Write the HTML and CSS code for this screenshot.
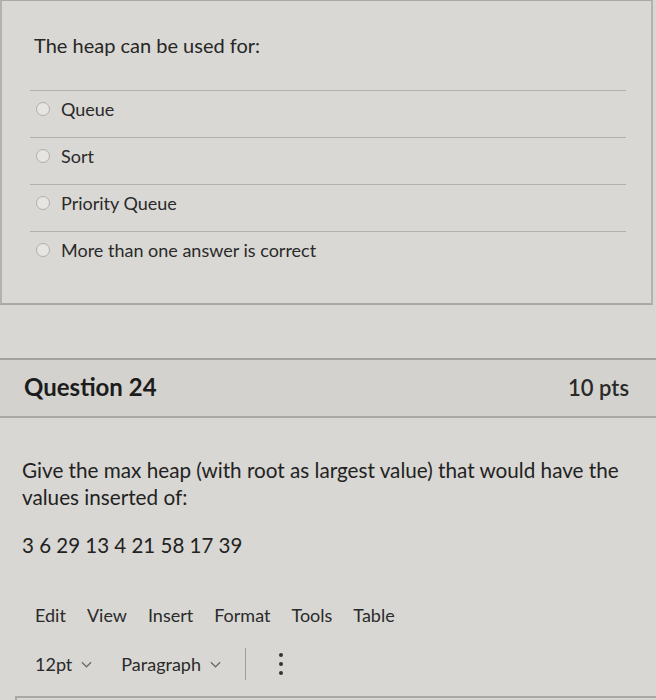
FILE: index.html
```html
<!DOCTYPE html>
<html>
<head>
<meta charset="utf-8">
<link rel="stylesheet" href="styles.css">
</head>
<body>
<div class="page">
  <div class="card">
    <div class="qtext">The heap can be used for:</div>
    <div class="options">
      <div class="opt"><span class="radio"></span><span>Queue</span></div>
      <div class="opt"><span class="radio"></span><span>Sort</span></div>
      <div class="opt"><span class="radio"></span><span>Priority Queue</span></div>
      <div class="opt"><span class="radio"></span><span>More than one answer is correct</span></div>
    </div>
  </div>

  <div class="qheader">
    <div class="qtitle">Question 24</div>
    <div class="qpts">10 pts</div>
  </div>

  <div class="qbody">
    <p class="prompt">Give the max heap (with root as largest value) that would have the values inserted of:</p>
    <p class="values">3 6 29 13 4 21 58 17 39</p>
  </div>

  <div class="menubar">
    <span>Edit</span><span>View</span><span>Insert</span><span>Format</span><span>Tools</span><span>Table</span>
  </div>

  <div class="toolbar">
    <div class="tb-item">12pt <svg class="chev" viewBox="0 0 12 7" width="11" height="7"><path d="M1 1 L6 6 L11 1" fill="none" stroke="#6a6a6a" stroke-width="1.3"/></svg></div>
    <div class="tb-item para">Paragraph <svg class="chev" viewBox="0 0 12 7" width="11" height="7"><path d="M1 1 L6 6 L11 1" fill="none" stroke="#6a6a6a" stroke-width="1.3"/></svg></div>
    <div class="tb-sep"></div>
    <div class="tb-dots"><i></i><i></i><i></i></div>
  </div>

  <div class="editor"></div>
</div>
</body>
</html>
```

FILE: styles.css
```css
html, body {
  margin: 0;
  padding: 0;
  background: #d8d7d3;
}
body {
  font-family: Lato, "Open Sans", sans-serif;
  color: #222;
  width: 656px;
  height: 700px;
  overflow: hidden;
}
.page {
  display: flex;
  flex-direction: column;
}
.card {
  height: 302px;
  border-top: 1px solid #aaa9a5;
  border-left: 2px solid #b3b2ae;
  border-right: 2px solid #b3b2ae;
  border-bottom: 2px solid #a9a8a4;
  margin-right: 3px;
  padding: 0 25px 0 28px;
  background: #d9d8d4;
}
.qtext {
  font-size: 20px;
  line-height: 24px;
  padding-top: 32px;
  height: 57px;
  padding-left: 4px;
  color: #262626;
}
.opt {
  border-top: 1px solid #b2b1ad;
  display: flex;
  align-items: flex-start;
  padding-top: 7px;
  box-sizing: border-box;
  height: 47px;
  font-size: 18px;
  line-height: 22px;
  color: #2a2a2a;
}
.radio {
  width: 12px;
  height: 12px;
  border: 1.5px solid #b0afab;
  border-radius: 50%;
  background: #e6e5e2;
  margin: 4px 11px 0 6px;
  flex: none;
}
.qheader {
  margin-top: 53px;
  height: 56px;
  border-top: 2px solid #a3a29e;
  border-bottom: 2px solid #a9a8a4;
  background: #d3d2ce;
  display: flex;
  align-items: center;
  justify-content: space-between;
  padding: 0 27px 0 24px;
}
.qtitle {
  font-size: 24px;
  font-weight: 700;
  color: #1c1c1c;
  margin-top: -4px;
}
.qpts {
  font-size: 22px;
  font-weight: 600;
  color: #2a2a2a;
  margin-top: -2px;
}
.qbody {
  padding: 39px 20px 0 22px;
}
.prompt {
  margin: 0;
  font-size: 20.7px;
  line-height: 27px;
  color: #222;
}
.values {
  margin: 21px 0 0 0;
  font-size: 20.5px;
  line-height: 26px;
  color: #222;
}
.menubar {
  display: flex;
  gap: 21px;
  padding: 46px 0 0 35px;
  font-size: 18px;
  line-height: 22px;
  color: #2a2a2a;
}
.toolbar {
  display: flex;
  align-items: center;
  padding: 21px 0 0 35px;
  height: 34px;
  font-size: 18px;
  color: #2a2a2a;
}
.tb-item {
  display: flex;
  align-items: center;
  gap: 9px;
}
.tb-item.para {
  margin-left: 29px;
}
.chev {
  margin-top: 1px;
}
.tb-sep {
  width: 1px;
  height: 32px;
  background: #9e9d99;
  margin-left: 24px;
}
.tb-dots {
  display: flex;
  flex-direction: column;
  gap: 5px;
  margin-left: 33px;
}
.tb-dots i {
  display: block;
  width: 4px;
  height: 4px;
  border-radius: 50%;
  background: #333;
}
.editor {
  margin: 15px 0 0 15px;
  border-top: 2px solid #a9a8a4;
  border-left: 2px solid #a9a8a4;
  height: 20px;
}
```
